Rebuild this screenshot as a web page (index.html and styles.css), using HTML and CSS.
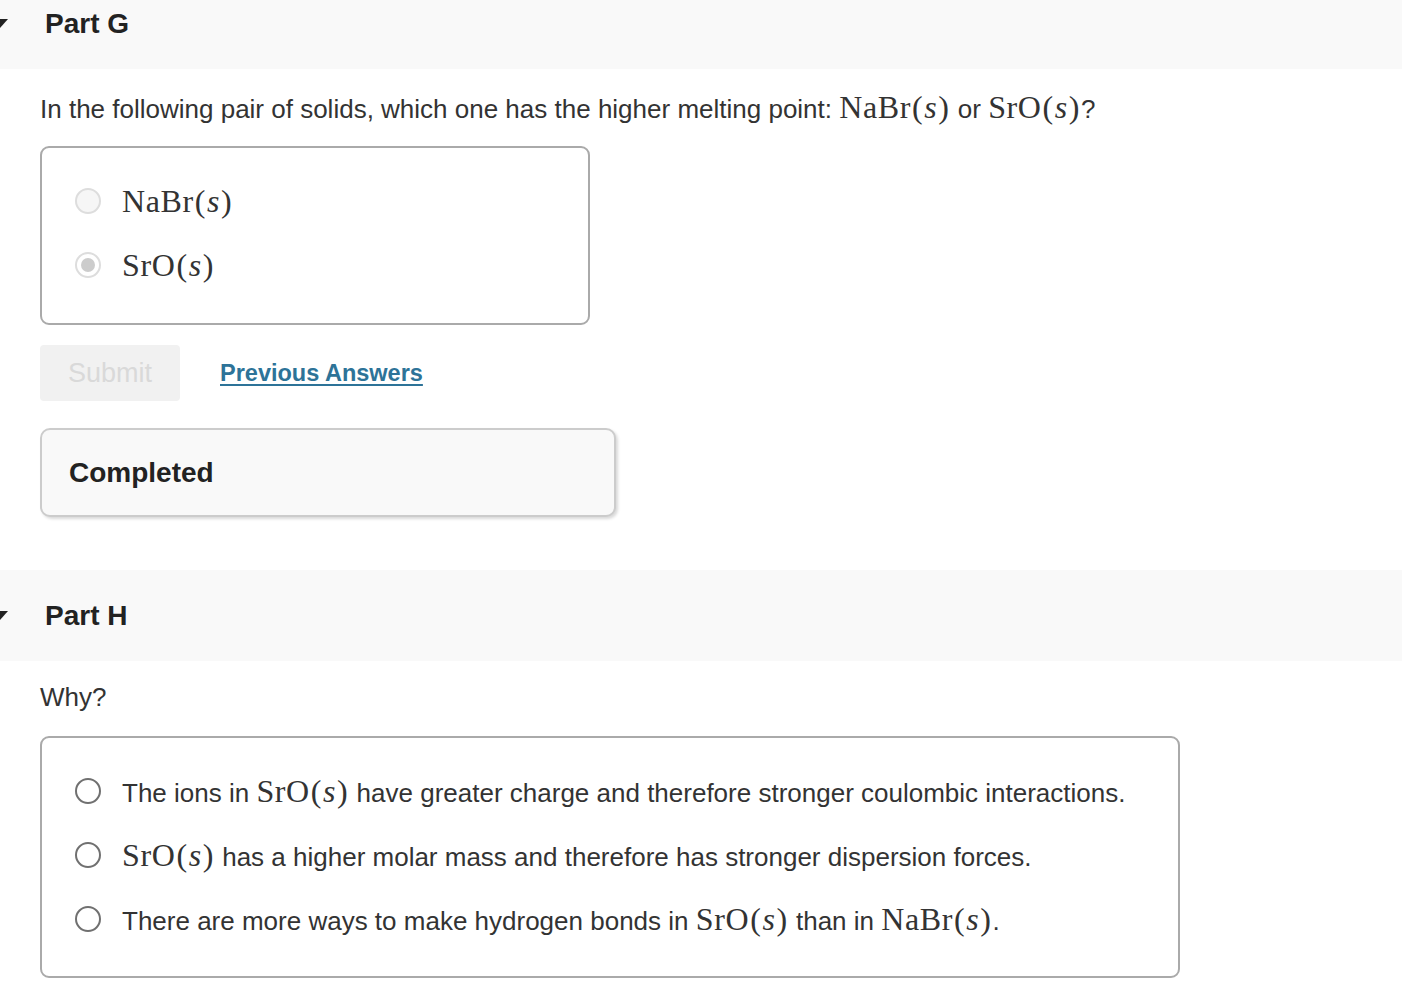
FILE: index.html
```html
<!DOCTYPE html>
<html>
<head>
<meta charset="utf-8">
<link rel="stylesheet" href="styles.css">
</head>
<body>
<section class="part part-first">
  <div class="part-head"><span class="caret"></span><h2>Part G</h2></div>
  <div class="part-body">
    <p class="question">In the following pair of solids, which one has the higher melting point: <span class="m">NaBr<span class="p">(</span><i>s</i><span class="p">)</span></span> or <span class="m">SrO<span class="p">(</span><i>s</i><span class="p">)</span></span>?</p>
    <div class="choices narrow">
      <label class="choice"><span class="radio disabled"></span><span class="m">NaBr<span class="p">(</span><i>s</i><span class="p">)</span></span></label>
      <label class="choice"><span class="radio disabled checked"></span><span class="m">SrO<span class="p">(</span><i>s</i><span class="p">)</span></span></label>
    </div>
    <div class="actions">
      <button class="submit" disabled>Submit</button>
      <a class="prev" href="#">Previous Answers</a>
    </div>
    <div class="completed">Completed</div>
  </div>
</section>
<section class="part">
  <div class="part-head"><span class="caret"></span><h2>Part H</h2></div>
  <div class="part-body">
    <p class="question why">Why?</p>
    <div class="choices wide">
      <label class="choice"><span class="radio"></span><span>The ions in <span class="m">SrO<span class="p">(</span><i>s</i><span class="p">)</span></span> have greater charge and therefore stronger coulombic interactions.</span></label>
      <label class="choice"><span class="radio"></span><span><span class="m">SrO<span class="p">(</span><i>s</i><span class="p">)</span></span> has a higher molar mass and therefore has stronger dispersion forces.</span></label>
      <label class="choice"><span class="radio"></span><span>There are more ways to make hydrogen bonds in <span class="m">SrO<span class="p">(</span><i>s</i><span class="p">)</span></span> than in <span class="m">NaBr<span class="p">(</span><i>s</i><span class="p">)</span></span>.</span></label>
    </div>
  </div>
</section>
</body>
</html>
```
FILE: styles.css
```css
html, body {
  margin: 0;
  padding: 0;
  background: #ffffff;
}
body {
  font-family: "Liberation Sans", Arial, Helvetica, sans-serif;
  color: #333333;
  font-size: 26px;
  overflow: hidden;
}
.part-first {
  margin-top: -22px;
}
.part-head {
  background: #f9f9f9;
  height: 91px;
  display: flex;
  align-items: center;
  position: relative;
}
.caret {
  position: absolute;
  left: -8px;
  top: 41px;
  width: 0;
  height: 0;
  border-left: 8px solid transparent;
  border-right: 8px solid transparent;
  border-top: 9px solid #222222;
}
.part-head h2 {
  margin: 0 0 0 45px;
  font-size: 28px;
  font-weight: bold;
  color: #222222;
}
.part-body {
  padding: 0 0 0 40px;
}
.question {
  margin: 0;
  padding-top: 21px;
  line-height: 34px;
  height: 56px;
}
.why {
  padding-top: 19px;
  height: 56px;
}
.m {
  font-family: "Liberation Serif", "DejaVu Serif", serif;
  font-size: 32px;
  letter-spacing: 0.6px;
}
.m i {
  font-style: italic;
}
.p {
  margin: 0 1px;
}
.choices {
  box-sizing: border-box;
  border: 2px solid #aaaaaa;
  border-radius: 9px;
  padding: 21px 0 26px 33px;
  display: flex;
  flex-direction: column;
}
.narrow {
  width: 550px;
}
.wide {
  width: 1140px;
  padding-top: 21px;
  padding-bottom: 25px;
}
.choice {
  height: 64px;
  display: flex;
  align-items: center;
  gap: 21px;
}
.radio {
  box-sizing: border-box;
  width: 26px;
  height: 26px;
  border-radius: 50%;
  border: 2px solid #707070;
  background: #ffffff;
  flex: none;
  position: relative;
}
.radio.disabled {
  border-color: #dddddd;
  background: #f6f6f6;
}
.radio.checked {
  background: #ffffff;
}
.radio.checked::after {
  content: "";
  position: absolute;
  left: 4px;
  top: 4px;
  width: 14px;
  height: 14px;
  border-radius: 50%;
  background: #cccccc;
}
.actions {
  margin-top: 20px;
  display: flex;
  align-items: center;
  gap: 40px;
  height: 56px;
}
.submit {
  width: 140px;
  height: 56px;
  border: none;
  border-radius: 4px;
  background: #f1f1f1;
  color: #d9d9d9;
  font-family: "Liberation Sans", Arial, sans-serif;
  font-size: 27px;
  padding: 0;
}
.prev {
  color: #2d7398;
  font-weight: bold;
  font-size: 23.5px;
  text-decoration: underline;
  text-underline-offset: 3px;
}
.completed {
  box-sizing: border-box;
  margin-top: 27px;
  width: 576px;
  height: 89px;
  border: 2px solid #cccccc;
  border-radius: 10px;
  background: #f9f9f9;
  box-shadow: 2px 2px 3px rgba(0,0,0,0.15);
  display: flex;
  align-items: center;
  padding-left: 27px;
  font-weight: bold;
  font-size: 28px;
  color: #222222;
  margin-bottom: 53px;
}
```
